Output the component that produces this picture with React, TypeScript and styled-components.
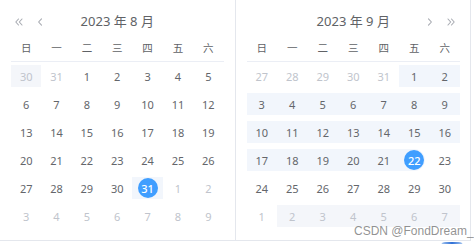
import styled, { createGlobalStyle } from "styled-components";

const GlobalStyle = createGlobalStyle`
  body {
    margin: 0;
    background: #fff;
    overflow: hidden;
    font-family: "Noto Sans", "Noto Sans CJK SC", sans-serif;
  }
`;

type Band = "full" | "start" | "end" | "none";

interface Cell {
  d: number;
  muted?: boolean;
  band?: Band;
  active?: boolean;
}

const seq = (from: number, to: number, extra: Partial<Cell> = {}): Cell[] => {
  const out: Cell[] = [];
  for (let i = from; i <= to; i++) out.push({ d: i, ...extra });
  return out;
};

const august: Cell[] = [
  { d: 30, muted: true, band: "full" },
  { d: 31, muted: true },
  ...seq(1, 30),
  { d: 31, band: "start", active: true },
  ...seq(1, 9, { muted: true }),
];

const september: Cell[] = [
  ...seq(27, 31, { muted: true }),
  ...seq(1, 21, { band: "full" }),
  { d: 22, band: "end", active: true },
  ...seq(23, 30),
  { d: 1, muted: true },
  ...seq(2, 7, { muted: true, band: "full" }),
];

const weekdays = ["日", "一", "二", "三", "四", "五", "六"];

const Page = styled.div`
  position: relative;
  width: 474px;
  height: 244px;
  overflow: hidden;
`;

const Picker = styled.div`
  display: flex;
  width: 471px;
  box-sizing: border-box;
  border-right: 1px solid #e4e7ed;
  border-bottom: 1px solid #e4e7ed;
`;

const Panel = styled.div<{ $right?: boolean }>`
  width: ${(p) => (p.$right ? 235 : 236)}px;
  box-sizing: border-box;
  padding: 0 ${(p) => (p.$right ? 10 : 11)}px 10px 11px;
  border-right: ${(p) => (p.$right ? "none" : "1px solid #e4e7ed")};
`;

const Header = styled.div`
  display: grid;
  grid-template-columns: 1fr auto 1fr;
  align-items: center;
  height: 23px;
  padding-top: 10px;
`;

const Title = styled.div`
  font-size: 13px;
  color: #606266;
  line-height: 23px;
`;

const Arrows = styled.div<{ $end?: boolean }>`
  display: flex;
  align-items: center;
  justify-content: ${(p) => (p.$end ? "flex-end" : "flex-start")};
  gap: 11px;
  padding: ${(p) => (p.$end ? "0 4px 0 0" : "0 0 0 3px")};
  color: #a8abb2;
`;

const Grid = styled.div`
  display: grid;
  grid-template-columns: repeat(7, 1fr);
`;

const WeekRow = styled(Grid)`
  height: 28px;
  border-bottom: 1px solid #ebeef5;
`;

const WeekDay = styled.div`
  display: flex;
  align-items: center;
  justify-content: center;
  font-size: 10.5px;
  color: #606266;
`;

const DayCell = styled.div`
  height: 28px;
  padding: 3px 0;
  box-sizing: border-box;
`;

const DayBand = styled.div<{ $band: Band; $muted?: boolean }>`
  height: 22px;
  display: flex;
  align-items: center;
  justify-content: center;
  background: ${(p) =>
    p.$band === "none" ? "transparent" : p.$muted ? "#f4f6fa" : "#f2f6fc"};
  margin-right: ${(p) => (p.$band === "end" ? "5px" : "0")};
  padding-left: ${(p) => (p.$band === "end" ? "5px" : "0")};
  border-radius: ${(p) => (p.$band === "end" ? "0 11px 11px 0" : "0")};
`;

const DayNum = styled.span<{ $muted?: boolean; $active?: boolean }>`
  width: 20px;
  height: 20px;
  border-radius: 50%;
  display: flex;
  align-items: center;
  justify-content: center;
  font-size: 11px;
  color: ${(p) => (p.$active ? "#fff" : p.$muted ? "#c0c4cc" : "#64666b")};
  background: ${(p) => (p.$active ? "#409eff" : "transparent")};
  font-weight: ${(p) => (p.$active ? 500 : 400)};
`;

const Watermark = styled.div`
  position: absolute;
  left: 354px;
  top: 224px;
  font-family: "Liberation Sans", "Noto Sans", sans-serif;
  font-size: 12px;
  color: rgba(110, 110, 110, 0.75);
  white-space: nowrap;
`;

const Footer = styled.div`
  display: flex;
  justify-content: flex-end;
  padding: 1px 11px 0 0;
`;

const ConfirmButton = styled.div`
  width: 22px;
  height: 16px;
  border-radius: 4px 4px 0 0;
  background: linear-gradient(90deg, #a8c8f0, #2e6fd6 50%, #a8c8f0);
`;

function Chevron({ double, dir }: { double?: boolean; dir: "l" | "r" }) {
  const flip = dir === "r" ? "scale(-1 1) translate(-10 0)" : undefined;
  return (
    <svg width="10" height="10" viewBox="0 0 10 10" fill="none">
      <g transform={flip} stroke="currentColor" strokeWidth="1.1" strokeLinecap="round" strokeLinejoin="round">
        {double ? (
          <>
            <path d="M4.5 2 L1.8 5 L4.5 8" />
            <path d="M8 2 L5.3 5 L8 8" />
          </>
        ) : (
          <path d="M6.5 1.8 L3.6 5 L6.5 8.2" />
        )}
      </g>
    </svg>
  );
}

function Month({ title, days, right }: { title: string; days: Cell[]; right?: boolean }) {
  return (
    <Panel $right={right}>
      <Header>
        <Arrows>
          {!right && (
            <>
              <Chevron double dir="l" />
              <Chevron dir="l" />
            </>
          )}
        </Arrows>
        <Title>{title}</Title>
        <Arrows $end>
          {right && (
            <>
              <Chevron dir="r" />
              <Chevron double dir="r" />
            </>
          )}
        </Arrows>
      </Header>
      <WeekRow>
        {weekdays.map((w) => (
          <WeekDay key={w}>{w}</WeekDay>
        ))}
      </WeekRow>
      <Grid>
        {days.map((c, i) => (
          <DayCell key={i}>
            <DayBand $band={c.band ?? "none"} $muted={c.muted}>
              <DayNum $muted={c.muted} $active={c.active}>
                {c.d}
              </DayNum>
            </DayBand>
          </DayCell>
        ))}
      </Grid>
    </Panel>
  );
}

export default function App() {
  return (
    <Page>
      <GlobalStyle />
      <Picker>
        <Month title="2023 年 8 月" days={august} />
        <Month title="2023 年 9 月" days={september} right />
      </Picker>
      <Footer>
        <ConfirmButton />
      </Footer>
      <Watermark>CSDN @FondDream_</Watermark>
    </Page>
  );
}
